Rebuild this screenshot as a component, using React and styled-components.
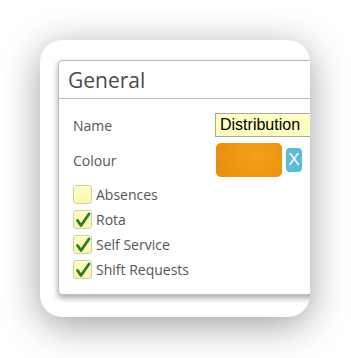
import React from 'react';
import styled, { createGlobalStyle } from 'styled-components';

const GlobalStyle = createGlobalStyle`
    html, body {
        margin: 0;
        padding: 0;
        background: #ffffff;
    }
    body {
        font-family: "Open Sans", "Liberation Sans", sans-serif;
    }
`;

const Stage = styled.div`
    width: 351px;
    height: 358px;
    box-sizing: border-box;
    padding: 40px 0 0 40px;
    overflow: hidden;
`;

const Card = styled.div`
    width: 270px;
    height: 277px;
    box-sizing: border-box;
    padding: 20px 0 0 18px;
    background: #ffffff;
    border-radius: 22px;
    box-shadow: 0 8px 38px rgba(0, 0, 0, 0.38);
    overflow: hidden;
`;

const Panel = styled.div`
    width: 300px;
    height: 235px;
    box-sizing: border-box;
    border: 1px solid #bdbdbd;
    border-radius: 4px;
    background: #ffffff;
    box-shadow: 0 3px 6px rgba(0, 0, 0, 0.35);
`;

const Header = styled.div`
    height: 38px;
    box-sizing: border-box;
    display: flex;
    align-items: center;
    padding-left: 9px;
    border-bottom: 1px solid #bdbdbd;
    font-family: "Open Sans", sans-serif;
    font-size: 21px;
    color: #4a4a4a;
`;

const Body = styled.div`
    padding: 14px 0 0 14px;
`;

const FieldRow = styled.div`
    display: grid;
    grid-template-columns: 142px 1fr;
    align-items: center;
    height: ${p => p.$h}px;
    margin-bottom: ${p => p.$gap || 0}px;
`;

const Label = styled.span`
    font-size: 14px;
    color: #555555;
`;

const TextInput = styled.input`
    height: 24px;
    width: 120px;
    box-sizing: border-box;
    border: 1px solid #aaaaaa;
    background: #ffffc4;
    padding: 0 4px;
    font-family: "Liberation Sans", Arial, sans-serif;
    font-size: 16px;
    color: #000000;
    outline: none;
`;

const ColourWrap = styled.div`
    display: flex;
    align-items: center;
    gap: 4px;
    margin-left: 1px;
`;

const Swatch = styled.div`
    width: 66px;
    height: 34px;
    border-radius: 5px;
    background: radial-gradient(circle at 60% 35%, #f5a019, #e88d0d);
`;

const ClearButton = styled.button`
    width: 16px;
    height: 24px;
    padding: 0;
    border: none;
    border-radius: 4px;
    background: #5bbcd8;
    color: #ffffff;
    font-family: "Liberation Sans", Arial, sans-serif;
    font-size: 17px;
    line-height: 24px;
    text-align: center;
`;

const CheckList = styled.div`
    display: flex;
    flex-direction: column;
    gap: 6px;
    margin-top: 8px;
`;

const CheckRow = styled.label`
    display: flex;
    align-items: center;
    gap: 4px;
    font-size: 14px;
    color: #555555;
`;

const Box = styled.span`
    width: 19px;
    height: 19px;
    box-sizing: border-box;
    border: 1px solid #cfcfb0;
    border-radius: 3px;
    background: linear-gradient(#ffffc8, #fbf7a8);
    display: flex;
    align-items: center;
    justify-content: center;
`;

const Tick = () => (
    <svg width="16" height="16" viewBox="0 0 16 16">
        <path d="M2.5 8.5 L6 13.5 L14 2" fill="none" stroke="#2b7d2b" strokeWidth="2.8" strokeLinecap="round" strokeLinejoin="round" />
    </svg>
);

const modules = [
    { name: 'Absences', on: false },
    { name: 'Rota', on: true },
    { name: 'Self Service', on: true },
    { name: 'Shift Requests', on: true },
];

export default function App() {
    return (
        <Stage>
            <GlobalStyle />
            <Card>
                <Panel>
                    <Header>General</Header>
                    <Body>
                        <FieldRow $h={24} $gap={6}>
                            <Label>Name</Label>
                            <TextInput defaultValue="Distribution" />
                        </FieldRow>
                        <FieldRow $h={34}>
                            <Label>Colour</Label>
                            <ColourWrap>
                                <Swatch />
                                <ClearButton>X</ClearButton>
                            </ColourWrap>
                        </FieldRow>
                        <CheckList>
                            {modules.map(m => (
                                <CheckRow key={m.name}>
                                    <Box>{m.on && <Tick />}</Box>
                                    {m.name}
                                </CheckRow>
                            ))}
                        </CheckList>
                    </Body>
                </Panel>
            </Card>
        </Stage>
    );
}
